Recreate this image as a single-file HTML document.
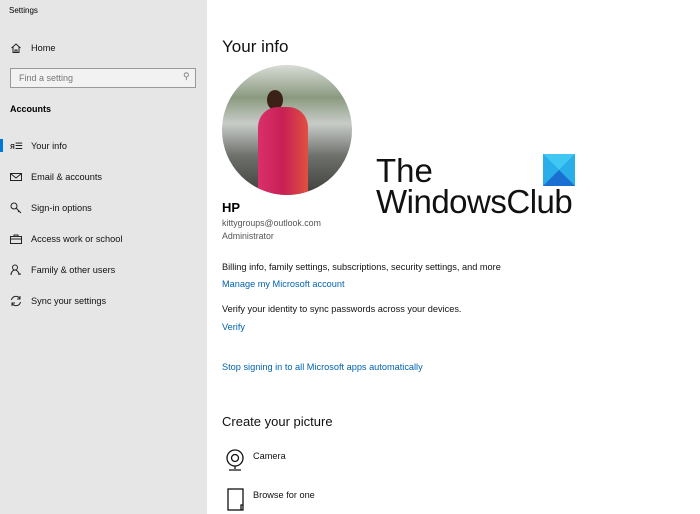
<html><head><style>
body{margin:0;width:700px;height:514px;overflow:hidden;font-family:"Liberation Sans",sans-serif;position:relative;background:#fff}
.sb{position:absolute;left:0;top:0;width:207px;height:514px;background:#e6e6e6}
.t{position:absolute;white-space:nowrap;color:#000}
.s{font-size:9.2px;color:#111}
.lk{color:#0063b1;font-size:9.2px}
</style></head><body>
<div class="sb">
<div class="t" style="left:9px;top:6px;font-size:8px">Settings</div>
<svg style="position:absolute;left:10px;top:42px" width="12" height="12" viewBox="0 0 12 12" fill="none" stroke="#222"><path d="M1.5 6L6 2l4.5 4M3 5v5.5h6V5M5 10.5V8h2v2.5"/></svg>
<div class="t s" style="left:31px;top:43px">Home</div>
<div style="position:absolute;left:10px;top:68px;width:184px;height:18px;border:1px solid #999;background:#f2f2f2"></div>
<div class="t" style="left:19px;top:73px;font-size:9px;color:#777">Find a setting</div>
<div class="t" style="left:183px;top:71px;font-size:9px;color:#777">⚲</div>
<div class="t" style="left:10px;top:104px;font-size:9px;font-weight:bold">Accounts</div>
<div style="position:absolute;left:0;top:139px;width:3px;height:13px;background:#0078d7"></div>
<div class="t" style="left:10px;top:141px;font-size:9px">ᴙ☰</div>
<div class="t s" style="left:31px;top:141px">Your info</div>
<svg style="position:absolute;left:10px;top:172px" width="12" height="10" viewBox="0 0 12 10" fill="none" stroke="#222"><rect x=".5" y="1.5" width="11" height="7"/><path d="M.5 1.5L6 6l5.5-4.5"/></svg>
<div class="t s" style="left:31px;top:172px">Email &amp; accounts</div>
<svg style="position:absolute;left:10px;top:202px" width="12" height="12" viewBox="0 0 12 12" fill="none" stroke="#222"><circle cx="4" cy="4" r="3"/><path d="M6 6l5 5M9 9l-1 1"/></svg>
<div class="t s" style="left:31px;top:203px">Sign-in options</div>
<svg style="position:absolute;left:10px;top:234px" width="12" height="10" viewBox="0 0 12 10" fill="none" stroke="#222"><rect x=".5" y="2.5" width="11" height="7"/><path d="M4 2.5V1h4v1.5M.5 5h11"/></svg>
<div class="t s" style="left:31px;top:234px">Access work or school</div>
<svg style="position:absolute;left:10px;top:264px" width="12" height="12" viewBox="0 0 12 12" fill="none" stroke="#222"><circle cx="5" cy="3.5" r="2.5"/><path d="M1 11c0-3 2-5 4-5s4 2 4 5M9 10h2"/></svg>
<div class="t s" style="left:31px;top:265px">Family &amp; other users</div>
<svg style="position:absolute;left:10px;top:295px" width="12" height="12" viewBox="0 0 12 12" fill="none" stroke="#222"><path d="M1.5 5A4.5 4.5 0 0 1 10 4M10.5 7A4.5 4.5 0 0 1 2 8M10 1v3H7M2 11V8h3"/></svg>
<div class="t s" style="left:31px;top:296px">Sync your settings</div>
</div>
<div class="t" style="left:222px;top:37px;font-size:17px;color:#111">Your info</div>
<div style="position:absolute;left:222px;top:65px;width:130px;height:130px;border-radius:50%;overflow:hidden;background:linear-gradient(#d8dcd6 0%,#8a9a80 25%,#c8ccc8 45%,#6e706c 70%,#3e3f3a 100%)">
<div style="position:absolute;left:45px;top:25px;width:16px;height:20px;border-radius:50%;background:#3a2218"></div>
<div style="position:absolute;left:36px;top:42px;width:50px;height:90px;background:linear-gradient(90deg,#d9306a,#c82055 50%,#e05040);border-radius:20px 20px 0 0"></div>
</div>
<div class="t" style="left:222px;top:200px;font-size:13px;font-weight:bold">HP</div>
<div class="t" style="left:222px;top:218px;font-size:8.8px;color:#555">kittygroups@outlook.com</div>
<div class="t" style="left:222px;top:231px;font-size:8.8px;color:#555">Administrator</div>
<div class="t" style="left:376px;top:152px;font-size:33px;color:#111">The</div>
<div class="t" style="left:376px;top:183px;font-size:33px;color:#111;letter-spacing:-0.5px">WindowsClub</div>
<svg style="position:absolute;left:543px;top:154px" width="32" height="32" viewBox="0 0 32 32"><rect width="32" height="32" fill="#1e88e0"/><path d="M0 0h32L16 16z" fill="#40c8f2"/><path d="M0 0v32l16-16z" fill="#2aaeea"/><path d="M32 0v32L16 16z" fill="#2aaeea"/><path d="M0 32h32L16 16z" fill="#1a70d0"/></svg>
<div class="t s" style="left:222px;top:262px">Billing info, family settings, subscriptions, security settings, and more</div>
<div class="t lk" style="left:222px;top:279px">Manage my Microsoft account</div>
<div class="t s" style="left:222px;top:304px">Verify your identity to sync passwords across your devices.</div>
<div class="t lk" style="left:222px;top:322px">Verify</div>
<div class="t lk" style="left:222px;top:362px">Stop signing in to all Microsoft apps automatically</div>
<div class="t" style="left:222px;top:414px;font-size:13px;color:#111">Create your picture</div>
<svg style="position:absolute;left:225px;top:448px" width="20" height="24" viewBox="0 0 20 24" fill="none" stroke="#111" stroke-width="1.3"><circle cx="10" cy="10" r="8"/><circle cx="10" cy="10" r="3.5"/><path d="M10 18v3M4 22h12"/></svg>
<div class="t s" style="left:253px;top:451px">Camera</div>
<svg style="position:absolute;left:227px;top:488px" width="18" height="24" viewBox="0 0 18 24" fill="none" stroke="#111" stroke-width="1.3"><rect x="1" y="1" width="15" height="21"/><path d="M16 17h-2v5"/></svg>
<div class="t s" style="left:253px;top:490px">Browse for one</div>
</body></html>
